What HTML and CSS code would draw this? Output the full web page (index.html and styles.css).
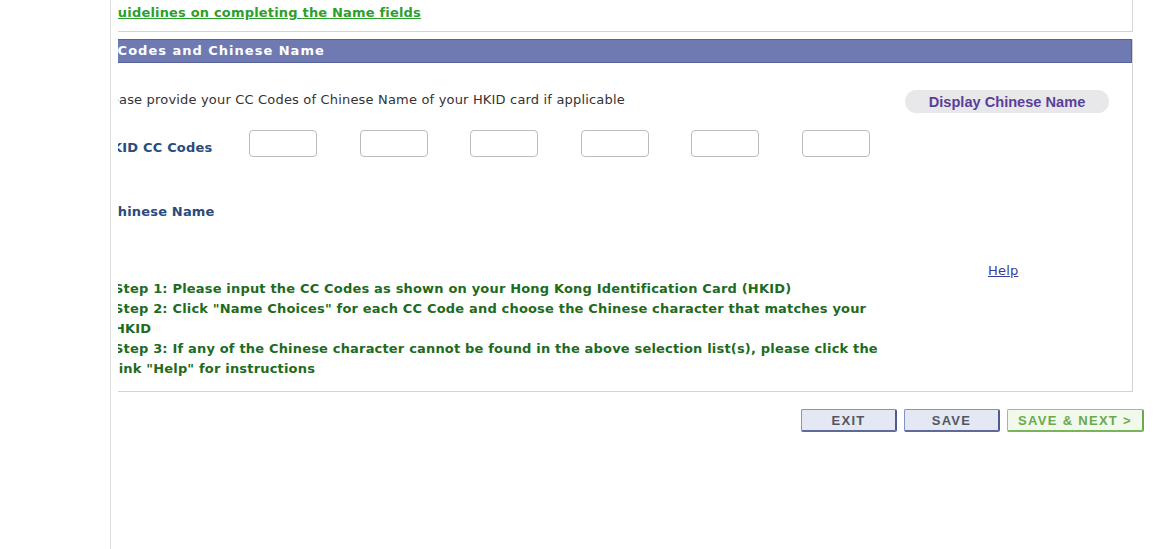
FILE: index.html
```html
<!DOCTYPE html>
<html lang="en">
<head>
    <meta charset="UTF-8">
    <meta name="viewport" content="width=device-width, initial-scale=1.0">
    <title>Personal Particulars - Chinese Name</title>
    <link rel="stylesheet" href="styles.css">
</head>

<body>
<div class="shell">
    <div class="gutter"></div>

    <div class="viewport">
        <div class="page">
            <div class="guide-box">
                <a href="#" class="guide-link">Guidelines on completing the Name fields</a>
            </div>

            <div class="panel">
                <div class="panel-head">CC Codes and Chinese Name</div>

                <div class="panel-body">
                    <div class="intro-row">
                        <p class="intro-text">Please provide your CC Codes of Chinese Name of your HKID card if applicable</p>
                        <button type="button" class="pill-button">Display Chinese Name</button>
                    </div>

                    <div class="codes-row">
                        <label class="field-label" for="cc1">HKID CC Codes</label>
                        <div class="code-inputs">
                            <input type="text" id="cc1" class="code-input" maxlength="4">
                            <input type="text" class="code-input" maxlength="4">
                            <input type="text" class="code-input" maxlength="4">
                            <input type="text" class="code-input" maxlength="4">
                            <input type="text" class="code-input" maxlength="4">
                            <input type="text" class="code-input" maxlength="4">
                        </div>
                    </div>

                    <div class="name-row">
                        <span class="field-label">Chinese Name</span>
                    </div>

                    <div class="help-row">
                        <a href="#" class="help-link">Help</a>
                    </div>

                    <div class="steps">
                        Step 1: Please input the CC Codes as shown on your Hong Kong Identification Card (HKID)<br>
                        Step 2: Click "Name Choices" for each CC Code and choose the Chinese character that matches your HKID<br>
                        Step 3: If any of the Chinese character cannot be found in the above selection list(s), please click the link "Help" for instructions
                    </div>
                </div>
            </div>

            <div class="actions">
                <button type="button" class="action-button">EXIT</button>
                <button type="button" class="action-button">SAVE</button>
                <button type="button" class="action-button next-button">SAVE &amp; NEXT &gt;</button>
            </div>
        </div>
    </div>
</div>
</body>
</html>
```

FILE: styles.css
```css
body {
    margin: 0;
    background-color: #ffffff;
    font-family: "DejaVu Sans", Verdana, sans-serif;
    font-size: 13px;
    letter-spacing: 0.18px;
    color: #333333;
}

.shell {
    display: flex;
    min-height: 100vh;
}

.gutter {
    width: 110px;
    border-right: 1px solid #dedede;
    flex-shrink: 0;
}

.viewport {
    flex: 1;
    margin-left: 7px;
    overflow: hidden;
}

.page {
    width: 1054px;
    margin-left: -28px;
}

.guide-box {
    margin-right: 11px;
    padding: 4px 0 10px 17px;
    border-right: 1px solid #d6d6d6;
    border-bottom: 1px solid #cfd3dc;
    line-height: 17px;
}

.guide-link {
    color: #2c9f2c;
    font-weight: bold;
    text-decoration: underline;
}

.panel {
    margin-top: 7px;
    margin-right: 11px;
    border-right: 1px solid #d3d3d3;
    border-bottom: 1px solid #d3d3d3;
}

.panel-head {
    height: 22px;
    line-height: 22px;
    background-color: #6e7ab1;
    border: 1px solid #56619a;
    color: #ffffff;
    font-weight: bold;
    letter-spacing: 1px;
}

.panel-body {
    padding: 27px 0 12px 0;
}

.intro-row {
    display: flex;
    align-items: flex-start;
    justify-content: space-between;
    padding-left: 9px;
    padding-right: 23px;
}

.intro-text {
    margin: 1px 0 0 0;
    line-height: 18px;
}

.pill-button {
    width: 204px;
    height: 23px;
    border: none;
    border-radius: 12px;
    background-color: #e8e8eb;
    color: #5a3f99;
    font-family: "Liberation Sans", Arial, sans-serif;
    font-weight: bold;
    font-size: 14.6px;
    letter-spacing: 0;
    padding: 0;
}

.codes-row {
    display: flex;
    align-items: flex-start;
    margin-top: 17px;
    padding-left: 11px;
}

.field-label {
    color: #2c4a7b;
    font-weight: bold;
    line-height: 18px;
}

.codes-row .field-label {
    width: 148px;
    margin-top: 9px;
}

.code-inputs {
    display: flex;
    gap: 42.6px;
}

.code-input {
    width: 68px;
    height: 27px;
    box-sizing: border-box;
    border: 1px solid #bcbcbc;
    border-radius: 4px;
    padding: 0 4px;
}

.name-row {
    margin-top: 46px;
    padding-left: 18px;
}

.help-row {
    margin-top: 41px;
    padding-left: 898px;
    line-height: 17px;
}

.help-link {
    color: #3b3c9b;
    text-decoration: underline;
}

.steps {
    width: 770px;
    padding-left: 24px;
    color: #1e6b1e;
    font-weight: bold;
    line-height: 20px;
}

.actions {
    display: flex;
    justify-content: flex-end;
    gap: 7px;
    margin-top: 17px;
}

.action-button {
    width: 96px;
    height: 23px;
    padding: 0;
    border: 1px solid #8392c4;
    border-right: 2px solid #4d5b8e;
    border-bottom: 2px solid #5d6a9a;
    border-radius: 2px;
    background-color: #e4e8f3;
    color: #525662;
    font-family: "Liberation Sans", Arial, sans-serif;
    font-weight: bold;
    font-size: 13px;
    letter-spacing: 1.3px;
}

.next-button {
    width: 137px;
    border-color: #93c874;
    border-right-color: #6aa84a;
    border-bottom-color: #79b45a;
    background-color: #f1f8ec;
    color: #6aa94e;
}
```
